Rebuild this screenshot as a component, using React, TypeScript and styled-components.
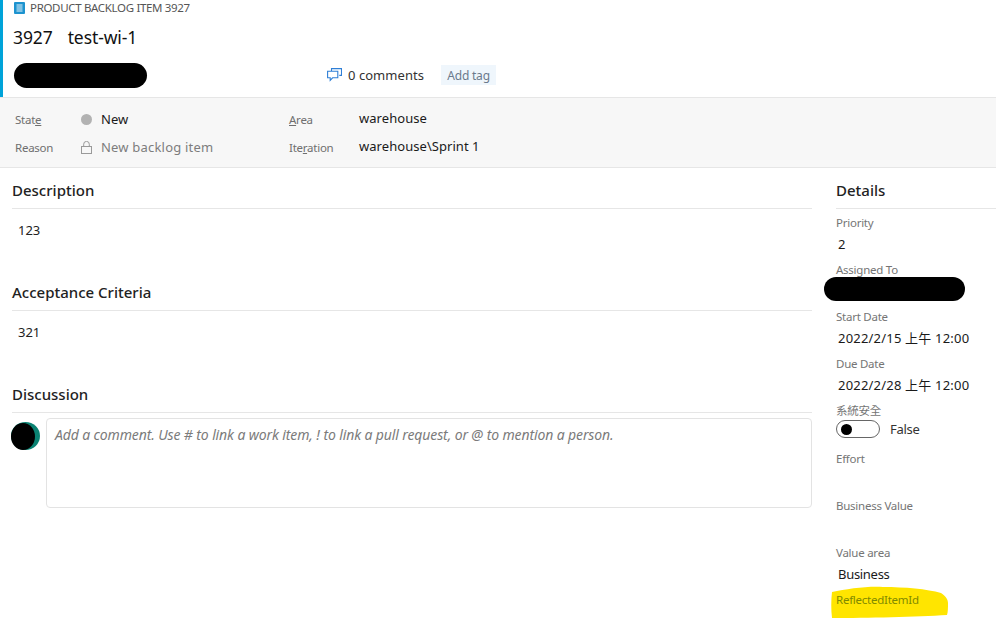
import styled, { createGlobalStyle } from 'styled-components';

const GlobalStyle = createGlobalStyle`
  html, body {
    margin: 0;
    padding: 0;
    background: #fff;
    font-family: "Noto Sans", "Noto Sans CJK TC", sans-serif;
    color: #1a1a1a;
  }
`;

const Page = styled.div`
  width: 996px;
  height: 635px;
  overflow: hidden;
`;

const Header = styled.header`
  height: 97px;
  box-sizing: border-box;
  border-left: 3px solid #00a3d9;
  padding-left: 10px;
`;

const TypeRow = styled.div`
  height: 15px;
  display: flex;
  align-items: center;
  gap: 5px;
  padding-left: 1px;
  font-size: 11.5px;
  letter-spacing: -0.33px;
  color: #555;
`;

const Title = styled.div`
  margin-top: 10px;
  height: 24px;
  display: flex;
  gap: 15px;
  align-items: center;
  font-size: 17.5px;
  letter-spacing: -0.1px;
  color: #111;
`;

const MetaRow = styled.div`
  margin-top: 13px;
  height: 26px;
  display: flex;
  align-items: center;
`;

const Redaction = styled.div<{ $width: number; $height: number }>`
  flex: none;
  width: ${({ $width }) => $width}px;
  height: ${({ $height }) => $height}px;
  background: #000;
  border-radius: 13px;
`;

const HeaderMask = styled(Redaction)`
  margin-left: 1px;
`;

const Comments = styled.div`
  margin-left: 180px;
  display: flex;
  align-items: center;
  gap: 6px;
  font-size: 13px;
  letter-spacing: 0.05px;
  color: #333;
`;

const AddTag = styled.div`
  margin-left: 17px;
  width: 55px;
  height: 20px;
  background: #eff6fc;
  color: #6b7a8c;
  font-size: 12px;
  letter-spacing: -0.2px;
  display: flex;
  align-items: center;
  justify-content: center;
`;

const StateBar = styled.section`
  height: 71px;
  box-sizing: border-box;
  background: #f7f7f7;
  border-top: 1px solid #e6e6e6;
  border-bottom: 1px solid #e6e6e6;
  padding: 6px 0 0 15px;
  display: grid;
  grid-template-columns: 66px 208px 70px 1fr;
  grid-auto-rows: 28px;
  align-items: center;
`;

const StateLabel = styled.div`
  padding-top: 2px;
  font-size: 11.5px;
  letter-spacing: -0.25px;
  color: #6f6f6f;
  u { text-underline-offset: 1px; }
`;

const StateValue = styled.div<{ $muted?: boolean; $low?: boolean }>`
  display: flex;
  align-items: center;
  gap: 9px;
  padding-top: ${({ $low }) => ($low ? 2 : 0)}px;
  font-size: 13px;
  letter-spacing: ${({ $muted }) => ($muted ? '0.2px' : '0.05px')};
  color: ${({ $muted }) => ($muted ? '#7d7d7d' : '#1a1a1a')};
`;

const StateDot = styled.span`
  width: 11px;
  height: 11px;
  border-radius: 50%;
  background: #b2b2b2;
`;

const Body = styled.main`
  display: flex;
`;

const LeftColumn = styled.div`
  width: 800px;
  margin-left: 12px;
`;

const Section = styled.section`
  height: 102px;
`;

const SectionTitle = styled.h2`
  margin: 0;
  height: 41px;
  box-sizing: border-box;
  padding-top: 11px;
  border-bottom: 1px solid #e6e6e6;
  font-size: 15px;
  line-height: 22px;
  font-weight: 500;
  letter-spacing: 0;
  color: #222;
`;

const SectionText = styled.div`
  padding: 12px 0 0 6px;
  font-size: 13px;
  line-height: 18px;
  color: #222;
`;

const CommentRow = styled.div`
  margin-top: 5px;
  display: flex;
  align-items: flex-start;
  gap: 6px;
`;

const Avatar = styled.div`
  flex: none;
  position: relative;
  width: 29px;
  height: 28px;
  margin: 4px 0 0 -1px;
  border-radius: 50%;
  background: #0a8272;
`;

const AvatarMask = styled.div`
  position: absolute;
  left: 0;
  top: 1px;
  width: 24px;
  height: 27px;
  border-radius: 50%;
  background: #000;
`;

const CommentBox = styled.div`
  flex: 1;
  height: 90px;
  box-sizing: border-box;
  padding: 7px 8px;
  border: 1px solid #e3e3e3;
  border-radius: 4px;
  font-size: 14px;
  line-height: 18px;
  letter-spacing: -0.12px;
  font-style: italic;
  color: #7b7b7b;
`;

const Details = styled.aside`
  margin-left: 24px;
  width: 160px;
`;

const DetailsTitle = styled(SectionTitle)`
  margin-bottom: 3px;
`;

const Field = styled.div<{ $tall?: boolean }>`
  position: relative;
  height: ${({ $tall }) => ($tall ? 48 : 47)}px;
  padding-top: 2px;
  box-sizing: border-box;
`;

const FieldLabel = styled.div`
  height: 17px;
  font-size: 11.5px;
  line-height: 17px;
  letter-spacing: -0.25px;
  color: #757575;
`;

const FieldValue = styled.div<{ $date?: boolean }>`
  padding: 4px 0 0 2px;
  font-size: 13px;
  line-height: 18px;
  letter-spacing: ${({ $date }) => ($date ? '0.2px' : '-0.3px')};
  color: #1a1a1a;
`;

const AssigneeMask = styled(Redaction)`
  position: absolute;
  left: -12px;
  top: 18px;
`;

const ToggleRow = styled.div`
  margin-top: 1px;
  display: flex;
  align-items: center;
  gap: 10px;
  font-size: 13px;
  letter-spacing: -0.3px;
  color: #333;
`;

const Toggle = styled.span`
  width: 44px;
  height: 18px;
  box-sizing: border-box;
  border: 1px solid #666;
  border-radius: 10px;
  padding: 3px 4px;
  background: #fff;
`;

const Knob = styled.span`
  display: block;
  width: 11px;
  height: 11px;
  border-radius: 50%;
  background: #000;
`;

const Highlight = styled.svg`
  position: absolute;
  left: -5px;
  top: -3px;
  z-index: -1;
`;

const HighlightedField = styled(Field)`
  isolation: isolate;
`;

const HighlightedLabel = styled(FieldLabel)`
  color: #7f8a00;
`;

function BacklogIcon() {
  return (
    <svg width="11" height="12" viewBox="0 0 11 12">
      <rect width="11" height="12" rx="1" fill="#1d93cf" />
      <path d="M2.5 3h6M2.5 5h6M2.5 7h6M2.5 9h6" stroke="#fff" strokeWidth="0.9" />
    </svg>
  );
}

function CommentsIcon() {
  return (
    <svg width="15" height="14" viewBox="0 0 15 14" fill="none" stroke="#2f7fd6" strokeWidth="1.1">
      <path d="M4.5 3V.6h10v6.8h-2.2" />
      <path d="M.6 3.2h10.2v6.6H5.6l-2.4 2.6V9.8H.6z" fill="#fff" />
    </svg>
  );
}

function LockIcon() {
  return (
    <svg width="11" height="13" viewBox="0 0 11 13" fill="none" stroke="#9a9a9a" strokeWidth="1">
      <rect x=".5" y="5.5" width="10" height="7" />
      <path d="M2.7 5.5V3.2a2.8 2.8 0 0 1 5.6 0v2.3" />
    </svg>
  );
}

export default function App() {
  return (
    <Page>
      <GlobalStyle />
      <Header>
        <TypeRow>
          <BacklogIcon />
          PRODUCT BACKLOG ITEM 3927
        </TypeRow>
        <Title>
          <span>3927</span>
          <span>test-wi-1</span>
        </Title>
        <MetaRow>
          <HeaderMask $width={133} $height={25} />
          <Comments>
            <CommentsIcon />
            0 comments
          </Comments>
          <AddTag>Add tag</AddTag>
        </MetaRow>
      </Header>

      <StateBar>
        <StateLabel>
          Stat<u>e</u>
        </StateLabel>
        <StateValue $low>
          <StateDot />
          New
        </StateValue>
        <StateLabel>
          <u>A</u>rea
        </StateLabel>
        <StateValue>warehouse</StateValue>
        <StateLabel>Reason</StateLabel>
        <StateValue $muted $low>
          <LockIcon />
          New backlog item
        </StateValue>
        <StateLabel>
          Ite<u>r</u>ation
        </StateLabel>
        <StateValue>warehouse\Sprint 1</StateValue>
      </StateBar>

      <Body>
        <LeftColumn>
          <Section>
            <SectionTitle>Description</SectionTitle>
            <SectionText>123</SectionText>
          </Section>
          <Section>
            <SectionTitle>Acceptance Criteria</SectionTitle>
            <SectionText>321</SectionText>
          </Section>
          <SectionTitle>Discussion</SectionTitle>
          <CommentRow>
            <Avatar>
              <AvatarMask />
            </Avatar>
            <CommentBox>
              Add a comment. Use # to link a work item, ! to link a pull request, or @ to mention a person.
            </CommentBox>
          </CommentRow>
        </LeftColumn>

        <Details>
          <DetailsTitle>Details</DetailsTitle>
          <Field>
            <FieldLabel>Priority</FieldLabel>
            <FieldValue>2</FieldValue>
          </Field>
          <Field>
            <FieldLabel>Assigned To</FieldLabel>
            <AssigneeMask $width={141} $height={24} />
          </Field>
          <Field>
            <FieldLabel>Start Date</FieldLabel>
            <FieldValue $date>2022/2/15 上午 12:00</FieldValue>
          </Field>
          <Field>
            <FieldLabel>Due Date</FieldLabel>
            <FieldValue $date>2022/2/28 上午 12:00</FieldValue>
          </Field>
          <Field $tall>
            <FieldLabel>系統安全</FieldLabel>
            <ToggleRow>
              <Toggle>
                <Knob />
              </Toggle>
              False
            </ToggleRow>
          </Field>
          <Field>
            <FieldLabel>Effort</FieldLabel>
          </Field>
          <Field>
            <FieldLabel>Business Value</FieldLabel>
          </Field>
          <Field>
            <FieldLabel>Value area</FieldLabel>
            <FieldValue>Business</FieldValue>
          </Field>
          <HighlightedField>
            <Highlight width="118" height="33" viewBox="0 0 118 33">
              <path d="M1 6C16 3 36 0 52 1c22 0 44 2 58 6 5 3 7 7 7 10 0 4 0 9-1 12-30 2-80 3-115 3C0 24 0 14 1 6z" fill="#ffe500" />
            </Highlight>
            <HighlightedLabel>ReflectedItemId</HighlightedLabel>
          </HighlightedField>
        </Details>
      </Body>
    </Page>
  );
}
